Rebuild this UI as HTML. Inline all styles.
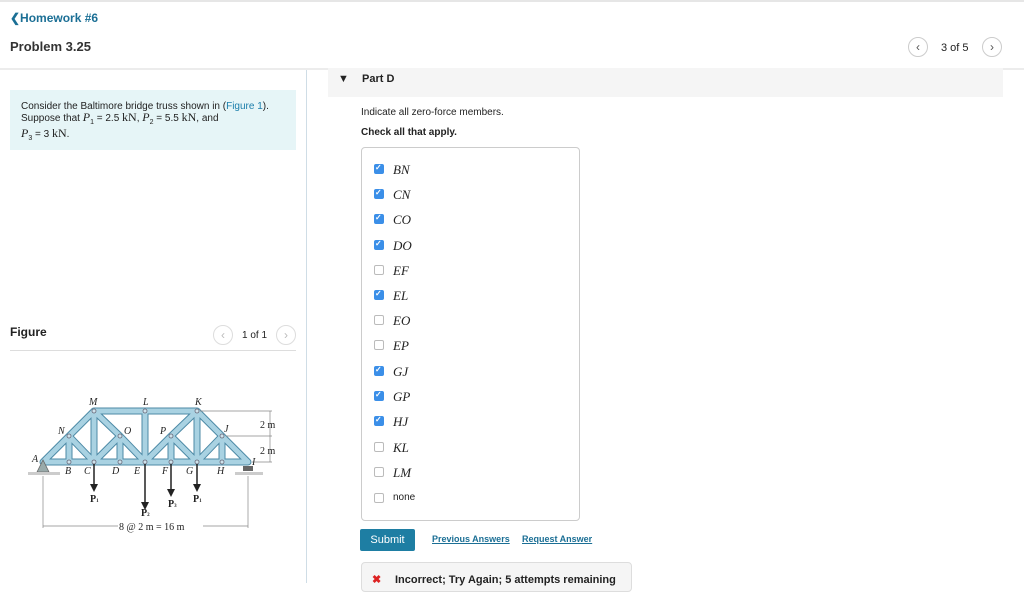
<!DOCTYPE html>
<html><head><meta charset="utf-8"><style>
*{margin:0;padding:0;box-sizing:border-box}
body{width:1024px;height:583px;overflow:hidden;background:#fff;font-family:"Liberation Sans",Arial,sans-serif;color:#333;position:relative}
.abs{position:absolute}
.circ{position:absolute;width:20px;height:20px;border:1px solid #ccc;border-radius:50%;color:#555;font-size:12px;text-align:center;line-height:18px}
.cb{position:absolute;left:374px;width:10px;height:10px;border-radius:2px}
.on{background:#3b8fe8;}
.on::after{content:"✓";color:#fff;font-size:8px;position:absolute;left:1px;top:-1px;font-weight:bold}
.off{border:1px solid #bbb;background:#fff}
.lbl{position:absolute;left:393px;font-family:"Liberation Serif",serif;font-style:italic;font-size:13px;color:#222}
</style></head><body>
<div class="abs" style="left:0;top:0;width:1024px;height:2px;background:#e6e6e6"></div>
<div class="abs" style="left:10px;top:11px;font-size:12px;font-weight:bold;color:#1b6f95">&#10094;Homework #6</div>
<div class="abs" style="left:10px;top:39px;font-size:13px;font-weight:bold;color:#333">Problem 3.25</div>
<div class="circ" style="left:908px;top:37px">&lsaquo;</div>
<div class="abs" style="left:941px;top:42px;font-size:11px;color:#222">3 of 5</div>
<div class="circ" style="left:982px;top:37px">&rsaquo;</div>
<div class="abs" style="left:0;top:68px;width:1024px;height:2px;background:#ececec"></div>
<div class="abs" style="left:306px;top:70px;width:1px;height:513px;background:#cfdde6"></div>

<div class="abs" style="left:10px;top:90px;width:286px;height:60px;background:#e6f5f7"></div>
<div class="abs" style="left:21px;top:101px;font-size:10px;line-height:11px;color:#222">Consider the Baltimore bridge truss shown in (<span style="color:#1b7eab">Figure 1</span>).<br>Suppose that <i style="font-family:'Liberation Serif',serif;font-size:12px">P</i><sub style="font-size:7px">1</sub> = 2.5 <span style="font-family:'Liberation Serif',serif;font-size:12px">kN</span>, <i style="font-family:'Liberation Serif',serif;font-size:12px">P</i><sub style="font-size:7px">2</sub> = 5.5 <span style="font-family:'Liberation Serif',serif;font-size:12px">kN</span>, and<br><i style="font-family:'Liberation Serif',serif;font-size:12px">P</i><sub style="font-size:7px">3</sub> = 3 <span style="font-family:'Liberation Serif',serif;font-size:12px">kN</span>.</div>

<div class="abs" style="left:10px;top:325px;font-size:12px;font-weight:bold;color:#222">Figure</div>
<div class="circ" style="left:213px;top:325px;color:#bbb;border-color:#ddd">&lsaquo;</div>
<div class="abs" style="left:242px;top:330px;font-size:10px;color:#222">1 of 1</div>
<div class="circ" style="left:276px;top:325px;color:#bbb;border-color:#ddd">&rsaquo;</div>
<div class="abs" style="left:10px;top:350px;width:286px;height:1px;background:#ddd"></div>

<svg class="abs" style="left:0;top:380px" width="300" height="160" viewBox="0 380 300 160">
<g stroke="#4d8aa6" stroke-width="7" stroke-linecap="round">
<path d="M43 462H248M94 411H197M43 462L94 411M197 411L248 462M69 462V436M94 462V411M120 462V436M145 462V411M171 462V436M197 462V411M222 462V436M69 436L94 462M94 411L120 436M120 436L94 462M120 436L145 462M145 462L171 436M171 436L197 411M171 436L197 462M197 462L222 436"/>
</g>
<g stroke="#a9d2e2" stroke-width="5" stroke-linecap="round">
<path d="M43 462H248M94 411H197M43 462L94 411M197 411L248 462M69 462V436M94 462V411M120 462V436M145 462V411M171 462V436M197 462V411M222 462V436M69 436L94 462M94 411L120 436M120 436L94 462M120 436L145 462M145 462L171 436M171 436L197 411M171 436L197 462M197 462L222 436"/>
</g>
<g fill="#cfe3ec" stroke="#667" stroke-width=".8">
<circle cx="69" cy="436" r="2"/><circle cx="94" cy="411" r="2"/><circle cx="120" cy="436" r="2"/><circle cx="145" cy="411" r="2"/><circle cx="171" cy="436" r="2"/><circle cx="197" cy="411" r="2"/><circle cx="222" cy="436" r="2"/>
<circle cx="69" cy="462" r="2"/><circle cx="94" cy="462" r="2"/><circle cx="120" cy="462" r="2"/><circle cx="145" cy="462" r="2"/><circle cx="171" cy="462" r="2"/><circle cx="197" cy="462" r="2"/><circle cx="222" cy="462" r="2"/>
</g>
<path d="M37 472L43 460L49 472Z" fill="#9aa" stroke="#666" stroke-width=".8"/>
<rect x="28" y="472" width="32" height="3" fill="#ccc"/>
<rect x="243" y="466" width="10" height="5" fill="#666"/>
<rect x="235" y="472" width="28" height="3" fill="#ccc"/>
<g stroke="#222" stroke-width="1.5"><path d="M94 464V485M145 464V503M171 464V490M197 464V485"/></g>
<g fill="#222"><path d="M90 484L94 492L98 484Z"/><path d="M141 502L145 510L149 502Z"/><path d="M167 489L171 497L175 489Z"/><path d="M193 484L197 492L201 484Z"/></g>
<g stroke="#888" stroke-width=".7" fill="none"><path d="M43 476V528M248 476V528M43 526H118M203 526H248M200 411H272M226 436H272M252 462H272M270 411V462"/></g>
<g font-family="Liberation Serif,serif" font-size="10" font-style="italic" fill="#222">
<text x="89" y="405">M</text><text x="143" y="405">L</text><text x="195" y="405">K</text><text x="58" y="434">N</text><text x="124" y="434">O</text><text x="160" y="434">P</text><text x="224" y="432">J</text><text x="32" y="462">A</text><text x="252" y="465">I</text>
<text x="65" y="474">B</text><text x="84" y="474">C</text><text x="112" y="474">D</text><text x="134" y="474">E</text><text x="162" y="474">F</text><text x="186" y="474">G</text><text x="217" y="474">H</text>
</g>
<g font-family="Liberation Serif,serif" font-size="10" font-weight="bold" fill="#222"><text x="90" y="502">P<tspan font-size="5">1</tspan></text><text x="141" y="516">P<tspan font-size="5">2</tspan></text><text x="168" y="507">P<tspan font-size="5">3</tspan></text><text x="193" y="502">P<tspan font-size="5">1</tspan></text></g>
<g font-family="Liberation Serif,serif" font-size="10" fill="#222"><text x="260" y="428">2 m</text><text x="260" y="454">2 m</text><text x="119" y="530">8 @ 2 m = 16 m</text></g>
</svg>

<div class="abs" style="left:328px;top:68px;width:675px;height:29px;background:#f5f5f5"></div>
<div class="abs" style="left:338px;top:73px;font-size:11px;color:#222">&#9660;</div>
<div class="abs" style="left:362px;top:73px;font-size:11px;font-weight:bold;color:#222">Part D</div>
<div class="abs" style="left:361px;top:107px;font-size:10px;color:#222">Indicate all zero-force members.</div>
<div class="abs" style="left:361px;top:127px;font-size:10px;font-weight:bold;color:#222">Check all that apply.</div>
<div class="abs" style="left:361px;top:147px;width:219px;height:374px;border:1px solid #ccc;border-radius:4px"></div>

<div class="cb on" style="top:164px"></div><div class="lbl" style="top:162px">BN</div>
<div class="cb on" style="top:189px"></div><div class="lbl" style="top:187px">CN</div>
<div class="cb on" style="top:214px"></div><div class="lbl" style="top:212px">CO</div>
<div class="cb on" style="top:240px"></div><div class="lbl" style="top:238px">DO</div>
<div class="cb off" style="top:265px"></div><div class="lbl" style="top:263px">EF</div>
<div class="cb on" style="top:290px"></div><div class="lbl" style="top:288px">EL</div>
<div class="cb off" style="top:315px"></div><div class="lbl" style="top:313px">EO</div>
<div class="cb off" style="top:340px"></div><div class="lbl" style="top:338px">EP</div>
<div class="cb on" style="top:366px"></div><div class="lbl" style="top:364px">GJ</div>
<div class="cb on" style="top:391px"></div><div class="lbl" style="top:389px">GP</div>
<div class="cb on" style="top:416px"></div><div class="lbl" style="top:414px">HJ</div>
<div class="cb off" style="top:442px"></div><div class="lbl" style="top:440px">KL</div>
<div class="cb off" style="top:467px"></div><div class="lbl" style="top:465px">LM</div>
<div class="cb off" style="top:493px"></div><div class="abs" style="left:393px;top:492px;font-size:10px;color:#222">none</div>

<div class="abs" style="left:360px;top:529px;width:55px;height:22px;background:#1e7ea3;border-radius:2px;color:#fff;font-size:11px;text-align:center;line-height:22px">Submit</div>
<div class="abs" style="left:432px;top:534px;font-size:9px;font-weight:bold;color:#1b6f95;text-decoration:underline">Previous Answers</div>
<div class="abs" style="left:522px;top:534px;font-size:9px;font-weight:bold;color:#1b6f95;text-decoration:underline">Request Answer</div>

<div class="abs" style="left:361px;top:562px;width:271px;height:30px;border:1px solid #ddd;border-radius:4px;background:#f5f5f5"></div>
<div class="abs" style="left:372px;top:573px;font-size:11px;font-weight:bold;color:#d22">&#10006;</div>
<div class="abs" style="left:395px;top:574px;font-size:11px;font-weight:bold;color:#222">Incorrect; Try Again; 5 attempts remaining</div>
</body></html>
